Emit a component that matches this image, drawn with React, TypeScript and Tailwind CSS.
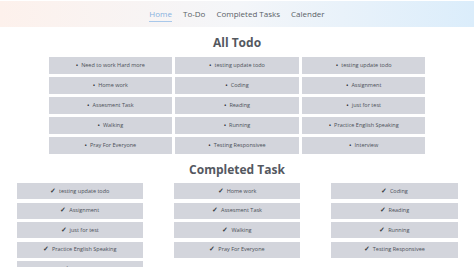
const todos = [
  'Need to work Hard more',
  'testing update todo',
  'testing update todo',
  'Home work',
  'Coding',
  'Assignment',
  'Assesment Task',
  'Reading',
  'just for test',
  'Walking',
  'Running',
  'Practice English Speaking',
  'Pray For Everyone',
  'Testing Responsivee',
  'Interview',
];

const completed = todos.slice(2);

export default function App() {
  return (
    <div className="min-h-screen bg-white text-[#4b5058]" style={{ fontFamily: '"Open Sans", sans-serif' }}>
      {/* Nav */}
      <nav className="mt-[1px] flex h-[26px] items-center justify-center gap-[11px] bg-gradient-to-r from-[#fdf1ec] via-[#f4f6f9] to-[#dbedfb] text-[8px]">
        <a className="border-b border-[#a9c8ea] pb-[1px] pt-[2px] text-[#86b1df]">Home</a>
        <a className="text-[#5a5f66]">To-Do</a>
        <a className="text-[#5a5f66]">Completed Tasks</a>
        <a className="text-[#5a5f66]">Calender</a>
      </nav>

      {/* All Todo */}
      <h2 className="mt-[7px] text-center text-[12px] font-bold leading-[18px] text-[#54585f]">All Todo</h2>
      <div className="mx-auto mt-[5px] grid w-[377px] grid-cols-3 gap-[3px]">
        {todos.map((t, i) => (
          <div key={i} className="flex h-[17px] items-center justify-center bg-[#d3d5dc] text-[5.5px] text-[#4b5058]">
            <span className="mr-[3px] text-[6.5px] text-[#2f3237]">•</span>
            {t}
          </div>
        ))}
      </div>

      {/* Completed */}
      <h2 className="mt-[7px] text-center text-[12px] font-bold leading-[18px] text-[#54585f]">Completed Task</h2>
      <div className="mx-auto mt-[4px] grid w-[441px] grid-cols-3 gap-x-[31px] gap-y-[3.5px]">
        {completed.map((t, i) => (
          <div key={i} className="flex h-[16px] items-center justify-center bg-[#d3d5dc] text-[5.5px] text-[#4b5058]">
            <span className="mr-[3px] text-[7px] font-bold text-[#3a3d42]">✓</span>
            {t}
          </div>
        ))}
      </div>
    </div>
  );
}
